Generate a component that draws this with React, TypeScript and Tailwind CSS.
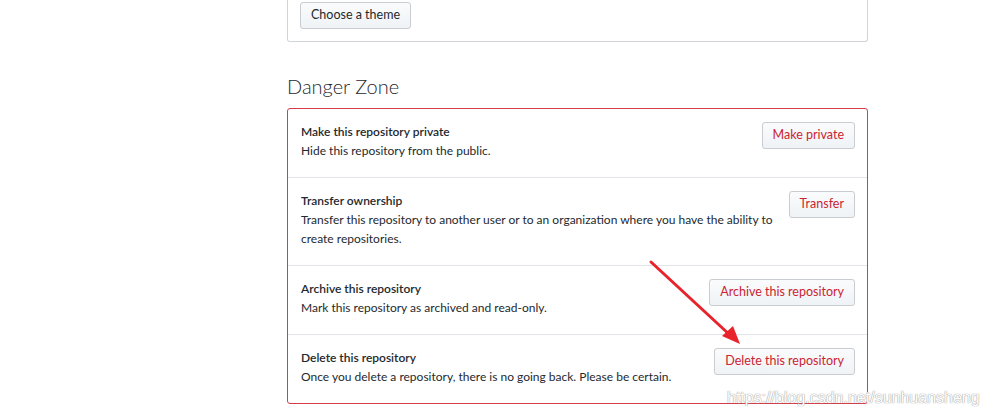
import React from "react";

const rows = [
  {
    title: "Make this repository private",
    desc: "Hide this repository from the public.",
    action: "Make private",
  },
  {
    title: "Transfer ownership",
    desc: "Transfer this repository to another user or to an organization where you have the ability to create repositories.",
    action: "Transfer",
  },
  {
    title: "Archive this repository",
    desc: "Mark this repository as archived and read-only.",
    action: "Archive this repository",
  },
  {
    title: "Delete this repository",
    desc: "Once you delete a repository, there is no going back. Please be certain.",
    action: "Delete this repository",
  },
];

function Btn({ children, danger }: { children: React.ReactNode; danger?: boolean }) {
  return (
    <button
      className={`h-[27px] px-[10px] rounded-[3px] border border-[#c9ccd0] bg-gradient-to-b from-[#fafbfc] to-[#eff3f6] text-[12.5px] leading-none whitespace-nowrap ${
        danger ? "text-[#cb2431]" : "text-[#24292e]"
      }`}
    >
      {children}
    </button>
  );
}

export default function App() {
  return (
    <div
      className="relative w-[985px] h-[416px] bg-white overflow-hidden text-[#24292e]"
      style={{ fontFamily: "Lato, 'Segoe UI', 'Noto Sans', sans-serif" }}
    >
      <div className="ml-[287px] w-[581px]">
        {/* Previous settings box (cut off at top) */}
        <div className="border-x border-b border-[#d1d5da] rounded-b-[3px] pt-[1px] pb-[12px] px-[12px]">
          <Btn>Choose a theme</Btn>
        </div>

        <h2 className="mt-[29px] mb-[7px] text-[20px] leading-[30px] font-light">Danger Zone</h2>

        <div className="border border-[#d73a49] rounded-[3px]">
          {rows.map((r, i) => (
            <div
              key={r.title}
              className={`flex items-start gap-[12px] pl-[13px] pr-[12px] pt-[13px] pb-[17px] ${
                i > 0 ? "border-t border-[#e1e4e8]" : ""
              }`}
            >
              <div className="flex-1 text-[12px] leading-[19px]">
                <div className="font-semibold">{r.title}</div>
                <p>{r.desc}</p>
              </div>
              <Btn danger>{r.action}</Btn>
            </div>
          ))}
        </div>
      </div>

      {/* annotation arrow */}
      <svg className="absolute left-0 top-0 pointer-events-none" width="985" height="416">
        <line x1="651" y1="262" x2="731" y2="336" stroke="#e8232c" strokeWidth="3" strokeLinecap="round" />
        <polygon points="740,344 722,336 733,326" fill="#e8232c" />
      </svg>

      {/* watermark */}
      <div
        className="absolute left-[727px] top-[386px] text-[16px] text-white"
        style={{ fontFamily: "'Liberation Sans', Arial, sans-serif", textShadow: "0 0 1px #999, 0 0 1px #999" }}
      >
        https://blog.csdn.net/sunhuansheng
      </div>
    </div>
  );
}
